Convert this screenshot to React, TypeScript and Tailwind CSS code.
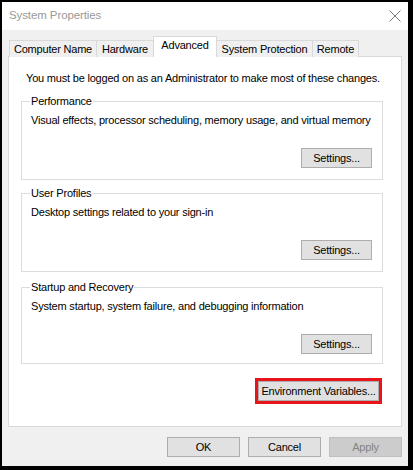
import React from 'react'

const font = { fontFamily: '"Liberation Sans", Arial, sans-serif' }

const TABS = [
  { label: 'Computer Name', w: 'w-[88px]' },
  { label: 'Hardware', w: 'w-[58px]' },
  { label: 'Advanced', w: 'w-[64px]' },
  { label: 'System Protection', w: 'w-[97px]' },
  { label: 'Remote', w: 'w-[47px]' },
]
const ACTIVE = 'Advanced'

function WinButton({ label, disabled = false, className = '' }: { label: string; disabled?: boolean; className?: string }) {
  return (
    <div
      className={`h-[20px] flex items-center justify-center border whitespace-nowrap text-[11px] tracking-[-0.2px] leading-none ${
        disabled ? 'bg-[#cccccc] border-[#bfbfbf] text-[#838383]' : 'bg-[#e1e1e1] border-[#adadad] text-black'
      } ${className}`}
    >
      {label}
    </div>
  )
}

function GroupBox({ title, desc, className = '' }: { title: string; desc: string; className?: string }) {
  return (
    <fieldset className={`border border-[#dcdcdc] px-[9px] ${className}`}>
      <legend className="ml-[-1px] px-[1px] text-[11px] tracking-[-0.2px] leading-[15px] text-black">{title}</legend>
      <p className="mt-[4px] text-[11px] tracking-[-0.2px] leading-[15px] text-black whitespace-nowrap">{desc}</p>
      <div className="flex justify-end mt-[20px] mr-[1px]">
        <WinButton label="Settings..." className="w-[71px]" />
      </div>
    </fieldset>
  )
}

export default function App() {
  return (
    <div className="w-[413px] h-[470px] bg-black pt-[2px] pl-[2px] pr-[5px] pb-[4px]" style={font}>
      <div className="w-full h-full bg-[#f0f0f0] flex flex-col">
        {/* Barra de título */}
        <div className="h-[28px] bg-white flex items-center justify-between pl-[7px] pr-[6px] shrink-0">
          <span className="text-[11.5px] tracking-[-0.1px] text-[#999999]">System Properties</span>
          <svg width="12" height="12" viewBox="0 0 12 12" className="mr-[1px]">
            <path d="M0.5 0.5 L11.5 11.5 M11.5 0.5 L0.5 11.5" stroke="#7a7a7a" strokeWidth="1" />
          </svg>
        </div>

        {/* Abas */}
        <div className="flex items-end h-[20px] mt-[7px] pl-[7px] shrink-0 relative z-10">
          {TABS.map((t) => {
            const sel = t.label === ACTIVE
            return (
              <div
                key={t.label}
                className={`${t.w} text-[11px] tracking-[-0.2px] text-black flex items-center justify-center whitespace-nowrap border-[#d9d9d9] border-l border-t border-r -ml-px first:ml-0 ${
                  sel ? 'h-[21px] bg-white relative z-10 pb-[3px]' : 'h-[17px] bg-[#f0f0f0]'
                }`}
              >
                {t.label}
              </div>
            )
          })}
        </div>

        {/* Painel */}
        <div className="mx-[6px] h-[371px] -mt-px bg-white border border-[#d9d9d9] pt-[14px] pl-[12px] pr-[18px] shrink-0">
          <p className="pl-[5px] text-[11px] tracking-[-0.2px] leading-[15px] text-black whitespace-nowrap">
            You must be logged on as an Administrator to make most of these changes.
          </p>
          <GroupBox className="mt-[8px] pb-[11px]" title="Performance" desc="Visual effects, processor scheduling, memory usage, and virtual memory" />
          <GroupBox className="mt-[6px] pb-[11px]" title="User Profiles" desc="Desktop settings related to your sign-in" />
          <GroupBox className="mt-[8px] pb-[9px]" title="Startup and Recovery" desc="System startup, system failure, and debugging information" />
          <div className="flex justify-end mt-[14px]">
            <div className="border-[3px] border-[#e8141b] mr-[1px]">
              <WinButton label="Environment Variables..." className="w-[121px] h-[18px]" />
            </div>
          </div>
        </div>

        {/* Botões */}
        <div className="flex justify-end gap-[8px] mt-[10px] mr-[6px]">
          <WinButton label="OK" className="w-[73px]" />
          <WinButton label="Cancel" className="w-[73px]" />
          <WinButton label="Apply" disabled className="w-[73px]" />
        </div>
      </div>
    </div>
  )
}
